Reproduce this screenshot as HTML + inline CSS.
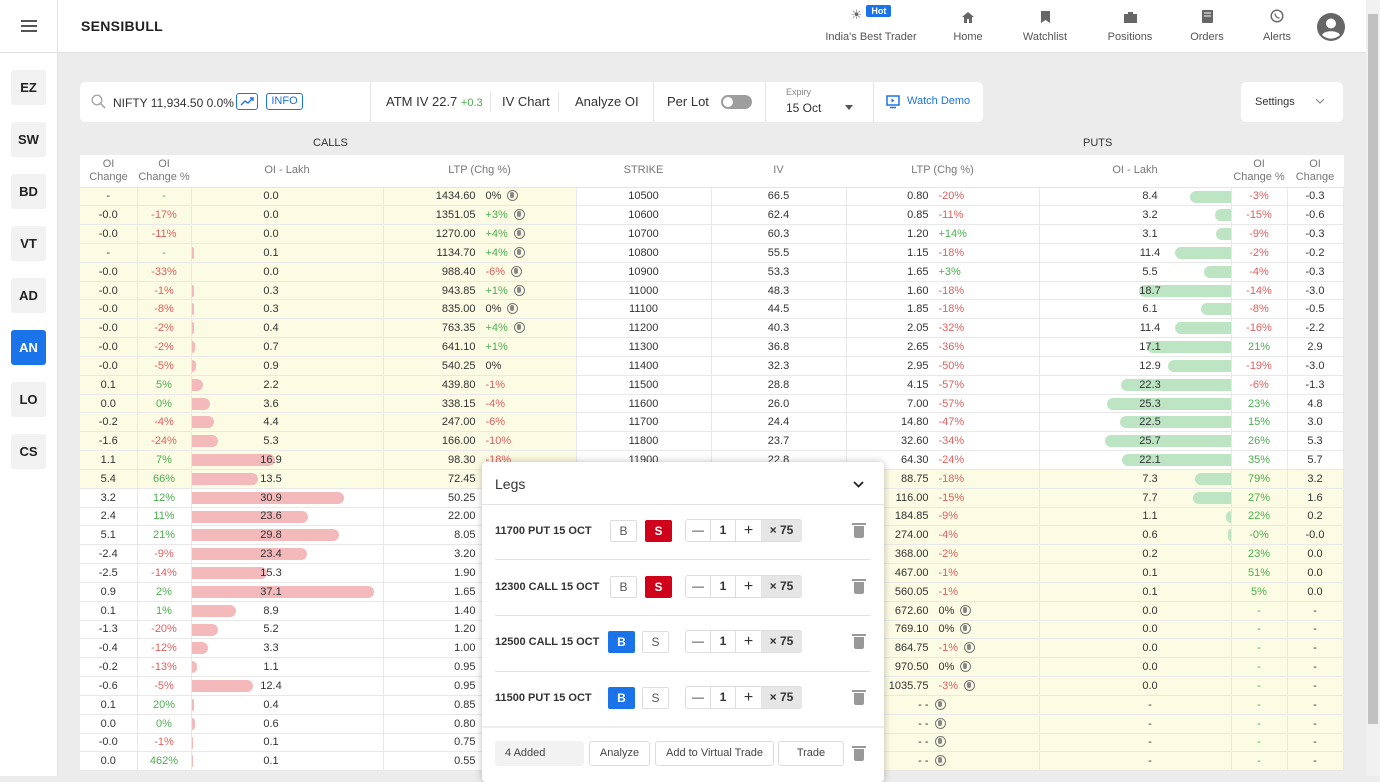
<!DOCTYPE html>
<html><head><meta charset="utf-8">
<style>
*{box-sizing:border-box;margin:0;padding:0}
body{width:1380px;height:776px;overflow:hidden;background:#ececec;font-family:"Liberation Sans",Arial,sans-serif;color:#333;position:relative}
.top{position:absolute;left:0;top:0;width:1366px;height:53px;background:#fff;border-bottom:1px solid #e2e2e2}
.side{position:absolute;left:0;top:53px;width:58px;height:723px;background:#fff;border-right:1px solid #e2e2e2}
.ham{position:absolute;left:0;top:0;width:58px;height:53px;border-right:1px solid #e2e2e2}
.ham i{position:absolute;left:21px;width:16px;height:2px;background:#555}
.logo{position:absolute;left:81px;top:18px;font-size:14px;font-weight:bold;letter-spacing:.3px;color:#222}
.nav{position:absolute;top:0;height:53px;text-align:center;font-size:11px;color:#555}
.nav .ic{height:25px;display:flex;justify-content:center;align-items:flex-end;padding-bottom:2px}
.nav .t{margin-top:6px}
.sb{position:absolute;left:11px;width:35px;height:35px;background:#f2f2f2;border-radius:3px;font-weight:bold;font-size:13px;color:#222;text-align:center;line-height:35px}
.card{position:absolute;background:#fff;border-radius:5px}
.tb{font-size:13px;color:#333}
.dv{position:absolute;width:1px;background:#e5e5e5}
table{position:absolute;left:80px;top:155px;border-collapse:collapse;table-layout:fixed;font-size:11px;background:#fff}
th{height:32px;font-weight:normal;color:#777;font-size:11px;line-height:13px;border-bottom:1px solid #e5e5e5}
td{height:18.83px;border:1px solid #e8e8e8;text-align:center;padding:0;position:relative;white-space:nowrap}
tr td:first-child{border-left:none}
.y{background:#fcfbe3}
.r{color:#e06060}.g{color:#4caf50}
td.oc .bar{position:absolute;left:0;top:3px;height:12px;background:#f4b9bb;border-radius:0 6px 6px 0}
td.oc span{position:relative;display:inline-block;margin-left:-32px}
td.op .bar{position:absolute;right:0;top:3px;height:12px;background:#bde4c3;border-radius:6px 0 0 6px}
td.op span{position:relative;display:inline-block;margin-left:30px}
td.lc{text-align:left}
td.lc b{font-weight:normal;display:inline-block;width:92px;text-align:right}
td.lp{text-align:left}
td.lp b{font-weight:normal;display:inline-block;width:82px;text-align:right}
td i{font-style:normal;margin-left:10px}
.ico{display:inline-block;width:11px;height:11px;border:1.3px solid #777;border-radius:50%;margin-left:6px;vertical-align:-2px;position:relative}
.ico:after{content:"";position:absolute;left:2px;top:1px;width:4px;height:6px;background:#888;border-radius:2px}
.pop{position:absolute;left:482px;top:462px;width:402px;height:320px;background:#fff;border-radius:4px;box-shadow:0 0 8px rgba(0,0,0,.25)}
.leg{position:absolute;left:13px;width:375px;height:56px;font-size:11px;font-weight:bold;color:#333}
.leg .n{position:absolute;left:0;top:16px}
.bx{position:absolute;top:11px;width:27px;height:22px;border:1px solid #ddd;border-radius:2px;text-align:center;line-height:20px;font-size:12px;color:#555;font-weight:normal;background:#fff}
.bs{background:#d0021b;border-color:#d0021b;color:#fff;font-weight:bold}
.bb{background:#1a73e8;border-color:#1a73e8;color:#fff;font-weight:bold}
.qty{position:absolute;left:190px;top:10px;width:117px;height:23px;border:1px solid #ddd;border-radius:3px;font-size:12px;font-weight:normal}
.qty div{position:absolute;top:0;height:21px;line-height:21px;text-align:center}
.trash{position:absolute;width:12px;height:15px}
.trash:before{content:"";position:absolute;left:0;top:0;width:14px;height:2px;background:#999;margin-left:-1px}
.trash:after{content:"";position:absolute;left:1px;top:3px;width:10px;height:12px;background:#999;border-radius:0 0 2px 2px}
.fb{position:absolute;top:279px;height:25px;border:1px solid #ddd;border-radius:3px;font-size:11px;color:#444;text-align:center;line-height:23px}
</style></head><body>
<div class="top">
 <div class="ham"><i style="top:20px"></i><i style="top:25px"></i><i style="top:30px"></i></div>
 <div class="logo">SENSIBULL</div>
 <div class="nav" style="left:822px;width:98px"><div class="ic"><span style="color:#666;font-size:13px">☀</span><span style="background:#1a73e8;color:#fff;font-size:9px;font-weight:bold;padding:1px 5px;border-radius:2px;margin-left:4px;position:relative;top:-6px">Hot</span></div><div class="t">India's Best Trader</div></div>
 <div class="nav" style="left:948px;width:40px"><div class="ic"><svg width="12" height="11" viewBox="0 0 12 11"><path d="M6 0L0 5h2v6h3V7h2v4h3V5h2z" fill="#666"/></svg></div><div class="t">Home</div></div>
 <div class="nav" style="left:1018px;width:54px"><div class="ic"><svg width="9" height="12"><path d="M0 0h9v12L4.5 9 0 12z" fill="#666"/></svg></div><div class="t">Watchlist</div></div>
 <div class="nav" style="left:1103px;width:54px"><div class="ic"><svg width="13" height="11"><path d="M4 2V0h5v2h4v9H0V2z" fill="#666"/></svg></div><div class="t">Positions</div></div>
 <div class="nav" style="left:1187px;width:40px"><div class="ic"><svg width="11" height="13"><rect width="11" height="13" rx="1" fill="#666"/><path d="M2 3h7M2 6h7" stroke="#fff"/></svg></div><div class="t">Orders</div></div>
 <div class="nav" style="left:1258px;width:38px"><div class="ic"><svg width="14" height="14"><circle cx="7" cy="7" r="5.8" fill="none" stroke="#666" stroke-width="1.4"/><path d="M5 4.5c0 2.5 2 4.5 4.5 4.5" stroke="#666" stroke-width="1.3" fill="none"/></svg></div><div class="t">Alerts</div></div>
 <svg style="position:absolute;left:1317px;top:13px" width="28" height="28"><circle cx="14" cy="14" r="14" fill="#666"/><circle cx="14" cy="10.5" r="5" fill="#fff"/><path d="M5 22c2-5 16-5 18 0a13 13 0 0 1-18 0z" fill="#fff"/></svg>
</div>
<div style="position:absolute;left:1366px;top:0;width:14px;height:776px;background:#f1f1f1"><div style="position:absolute;left:2px;top:14px;width:10px;height:710px;background:#c1c1c1"></div></div>
<div class="side">
 <div class="sb" style="top:17px">EZ</div><div class="sb" style="top:69px">SW</div><div class="sb" style="top:121px">BD</div><div class="sb" style="top:173px">VT</div><div class="sb" style="top:225px">AD</div><div class="sb" style="top:277px;background:#1a73e8;color:#fff">AN</div><div class="sb" style="top:329px">LO</div><div class="sb" style="top:381px">CS</div>
</div>
<div class="card tb" style="left:80px;top:82px;width:903px;height:40px">
 <svg style="position:absolute;left:11px;top:12px" width="15" height="15"><circle cx="6" cy="6" r="4.8" fill="none" stroke="#aaa" stroke-width="1.4"/><path d="M9.5 9.5l4.5 4.5" stroke="#aaa" stroke-width="1.6"/></svg>
 <div style="position:absolute;left:33px;top:14px;font-size:12px">NIFTY 11,934.50 0.0%</div>
 <div style="position:absolute;left:156px;top:11px;width:22px;height:17px;border:1.3px solid #1a73e8;border-radius:3px"><svg width="20" height="15"><path d="M4 11l4-4 3 2 5-5M13 4h3v3" stroke="#1a73e8" stroke-width="1.4" fill="none"/></svg></div>
 <div style="position:absolute;left:186px;top:11px;width:37px;height:17px;border:1.3px solid #1a73e8;border-radius:3px;color:#1a73e8;font-size:11px;text-align:center;line-height:15px">INFO</div>
 <div class="dv" style="left:290px;top:0;height:40px"></div>
 <div style="position:absolute;left:306px;top:12px">ATM IV 22.7 <span class="g" style="font-size:11px">+0.3</span></div>
 <div class="dv" style="left:410px;top:10px;height:20px"></div>
 <div style="position:absolute;left:422px;top:12px">IV Chart</div>
 <div class="dv" style="left:478px;top:10px;height:20px"></div>
 <div style="position:absolute;left:495px;top:12px">Analyze OI</div>
 <div class="dv" style="left:573px;top:0;height:40px"></div>
 <div style="position:absolute;left:587px;top:12px">Per Lot</div>
 <div style="position:absolute;left:641px;top:13px;width:31px;height:14px;border-radius:7px;background:#9e9e9e"><div style="position:absolute;left:2px;top:2px;width:10px;height:10px;border-radius:50%;background:#fff"></div></div>
 <div class="dv" style="left:685px;top:0;height:40px"></div>
 <div style="position:absolute;left:706px;top:5px;font-size:9px;color:#888">Expiry</div>
 <div style="position:absolute;left:706px;top:19px;font-size:12px">15 Oct</div>
 <div style="position:absolute;left:765px;top:23px;border:4.5px solid transparent;border-top:5px solid #555"></div>
 <div class="dv" style="left:793px;top:0;height:40px"></div>
 <svg style="position:absolute;left:806px;top:13px" width="14" height="14"><rect x="1" y="1" width="12" height="9" fill="none" stroke="#1a73e8" stroke-width="1.5"/><path d="M5.5 3.5v4l3-2z" fill="#1a73e8"/><path d="M4 12.5h6" stroke="#1a73e8" stroke-width="1.5"/></svg>
 <div style="position:absolute;left:827px;top:13px;font-size:11px;color:#1a73e8">Watch Demo</div>
</div>
<div class="card" style="left:1241px;top:82px;width:102px;height:40px;font-size:11px">
 <div style="position:absolute;left:14px;top:14px">Settings</div>
 <svg style="position:absolute;left:74px;top:16px" width="10" height="7"><path d="M1 1l4 4 4-4" stroke="#888" stroke-width="1.2" fill="none"/></svg>
</div>
<div style="position:absolute;left:313px;top:137px;font-size:11px;color:#333">CALLS</div>
<div style="position:absolute;left:1083px;top:137px;font-size:11px;color:#333">PUTS</div>
<div style="position:absolute;left:80px;top:155px;width:1263px;height:32px;background:#fff;border-radius:5px 5px 0 0"></div>
<table>
<colgroup><col style="width:57px"><col style="width:54px"><col style="width:192px"><col style="width:193px"><col style="width:135px"><col style="width:135px"><col style="width:193px"><col style="width:192px"><col style="width:56px"><col style="width:56px"></colgroup>
<tr><th>OI<br>Change</th><th>OI<br>Change %</th><th>OI - Lakh</th><th>LTP (Chg %)</th><th>STRIKE</th><th>IV</th><th>LTP (Chg %)</th><th>OI - Lakh</th><th>OI<br>Change %</th><th>OI<br>Change</th></tr>
<tr class="c"><td class="y">-</td><td class="y g">-</td><td class="y oc"><span>0.0</span></td><td class="y lc"><b>1434.60</b><i>0%</i><s class="ico"></s></td><td>10500</td><td>66.5</td><td class="lp"><b>0.80</b><i class="r">-20%</i></td><td class="op"><div class="bar" style="width:41px"></div><span>8.4</span></td><td class="r">-3%</td><td>-0.3</td></tr>
<tr><td class="y">-0.0</td><td class="y r">-17%</td><td class="y oc"><span>0.0</span></td><td class="y lc"><b>1351.05</b><i class="g">+3%</i><s class="ico"></s></td><td>10600</td><td>62.4</td><td class="lp"><b>0.85</b><i class="r">-11%</i></td><td class="op"><div class="bar" style="width:16px"></div><span>3.2</span></td><td class="r">-15%</td><td>-0.6</td></tr>
<tr><td class="y">-0.0</td><td class="y r">-11%</td><td class="y oc"><span>0.0</span></td><td class="y lc"><b>1270.00</b><i class="g">+4%</i><s class="ico"></s></td><td>10700</td><td>60.3</td><td class="lp"><b>1.20</b><i class="g">+14%</i></td><td class="op"><div class="bar" style="width:15px"></div><span>3.1</span></td><td class="r">-9%</td><td>-0.3</td></tr>
<tr><td class="y">-</td><td class="y g">-</td><td class="y oc"><div class="bar" style="width:2px"></div><span>0.1</span></td><td class="y lc"><b>1134.70</b><i class="g">+4%</i><s class="ico"></s></td><td>10800</td><td>55.5</td><td class="lp"><b>1.15</b><i class="r">-18%</i></td><td class="op"><div class="bar" style="width:56px"></div><span>11.4</span></td><td class="r">-2%</td><td>-0.2</td></tr>
<tr><td class="y">-0.0</td><td class="y r">-33%</td><td class="y oc"><span>0.0</span></td><td class="y lc"><b>988.40</b><i class="r">-6%</i><s class="ico"></s></td><td>10900</td><td>53.3</td><td class="lp"><b>1.65</b><i class="g">+3%</i></td><td class="op"><div class="bar" style="width:27px"></div><span>5.5</span></td><td class="r">-4%</td><td>-0.3</td></tr>
<tr><td class="y">-0.0</td><td class="y r">-1%</td><td class="y oc"><div class="bar" style="width:2px"></div><span>0.3</span></td><td class="y lc"><b>943.85</b><i class="g">+1%</i><s class="ico"></s></td><td>11000</td><td>48.3</td><td class="lp"><b>1.60</b><i class="r">-18%</i></td><td class="op"><div class="bar" style="width:92px"></div><span>18.7</span></td><td class="r">-14%</td><td>-3.0</td></tr>
<tr><td class="y">-0.0</td><td class="y r">-8%</td><td class="y oc"><div class="bar" style="width:2px"></div><span>0.3</span></td><td class="y lc"><b>835.00</b><i>0%</i><s class="ico"></s></td><td>11100</td><td>44.5</td><td class="lp"><b>1.85</b><i class="r">-18%</i></td><td class="op"><div class="bar" style="width:30px"></div><span>6.1</span></td><td class="r">-8%</td><td>-0.5</td></tr>
<tr><td class="y">-0.0</td><td class="y r">-2%</td><td class="y oc"><div class="bar" style="width:2px"></div><span>0.4</span></td><td class="y lc"><b>763.35</b><i class="g">+4%</i><s class="ico"></s></td><td>11200</td><td>40.3</td><td class="lp"><b>2.05</b><i class="r">-32%</i></td><td class="op"><div class="bar" style="width:56px"></div><span>11.4</span></td><td class="r">-16%</td><td>-2.2</td></tr>
<tr><td class="y">-0.0</td><td class="y r">-2%</td><td class="y oc"><div class="bar" style="width:3px"></div><span>0.7</span></td><td class="y lc"><b>641.10</b><i class="g">+1%</i></td><td>11300</td><td>36.8</td><td class="lp"><b>2.65</b><i class="r">-36%</i></td><td class="op"><div class="bar" style="width:84px"></div><span>17.1</span></td><td class="g">21%</td><td>2.9</td></tr>
<tr><td class="y">-0.0</td><td class="y r">-5%</td><td class="y oc"><div class="bar" style="width:4px"></div><span>0.9</span></td><td class="y lc"><b>540.25</b><i>0%</i></td><td>11400</td><td>32.3</td><td class="lp"><b>2.95</b><i class="r">-50%</i></td><td class="op"><div class="bar" style="width:63px"></div><span>12.9</span></td><td class="r">-19%</td><td>-3.0</td></tr>
<tr><td class="y">0.1</td><td class="y g">5%</td><td class="y oc"><div class="bar" style="width:11px"></div><span>2.2</span></td><td class="y lc"><b>439.80</b><i class="r">-1%</i></td><td>11500</td><td>28.8</td><td class="lp"><b>4.15</b><i class="r">-57%</i></td><td class="op"><div class="bar" style="width:110px"></div><span>22.3</span></td><td class="r">-6%</td><td>-1.3</td></tr>
<tr><td class="y">0.0</td><td class="y g">0%</td><td class="y oc"><div class="bar" style="width:18px"></div><span>3.6</span></td><td class="y lc"><b>338.15</b><i class="r">-4%</i></td><td>11600</td><td>26.0</td><td class="lp"><b>7.00</b><i class="r">-57%</i></td><td class="op"><div class="bar" style="width:124px"></div><span>25.3</span></td><td class="g">23%</td><td>4.8</td></tr>
<tr><td class="y">-0.2</td><td class="y r">-4%</td><td class="y oc"><div class="bar" style="width:22px"></div><span>4.4</span></td><td class="y lc"><b>247.00</b><i class="r">-6%</i></td><td>11700</td><td>24.4</td><td class="lp"><b>14.80</b><i class="r">-47%</i></td><td class="op"><div class="bar" style="width:111px"></div><span>22.5</span></td><td class="g">15%</td><td>3.0</td></tr>
<tr><td class="y">-1.6</td><td class="y r">-24%</td><td class="y oc"><div class="bar" style="width:26px"></div><span>5.3</span></td><td class="y lc"><b>166.00</b><i class="r">-10%</i></td><td>11800</td><td>23.7</td><td class="lp"><b>32.60</b><i class="r">-34%</i></td><td class="op"><div class="bar" style="width:126px"></div><span>25.7</span></td><td class="g">26%</td><td>5.3</td></tr>
<tr><td class="y">1.1</td><td class="y g">7%</td><td class="y oc"><div class="bar" style="width:83px"></div><span>16.9</span></td><td class="y lc"><b>98.30</b><i class="r">-18%</i></td><td>11900</td><td>22.8</td><td class="lp"><b>64.30</b><i class="r">-24%</i></td><td class="op"><div class="bar" style="width:109px"></div><span>22.1</span></td><td class="g">35%</td><td>5.7</td></tr>
<tr><td class="y">5.4</td><td class="y g">66%</td><td class="y oc"><div class="bar" style="width:66px"></div><span>13.5</span></td><td class="y lc"><b>72.45</b><i class="r">-16%</i></td><td>12000</td><td>21.9</td><td class="y lp"><b>88.75</b><i class="r">-18%</i></td><td class="y op"><div class="bar" style="width:36px"></div><span>7.3</span></td><td class="y g">79%</td><td class="y">3.2</td></tr>
<tr><td>3.2</td><td class="g">12%</td><td class="oc"><div class="bar" style="width:152px"></div><span>30.9</span></td><td class="lc"><b>50.25</b><i class="r">-20%</i></td><td>12100</td><td>21.0</td><td class="y lp"><b>116.00</b><i class="r">-15%</i></td><td class="y op"><div class="bar" style="width:38px"></div><span>7.7</span></td><td class="y g">27%</td><td class="y">1.6</td></tr>
<tr><td>2.4</td><td class="g">11%</td><td class="oc"><div class="bar" style="width:116px"></div><span>23.6</span></td><td class="lc"><b>22.00</b><i class="r">-30%</i></td><td>12200</td><td>20.1</td><td class="y lp"><b>184.85</b><i class="r">-9%</i></td><td class="y op"><div class="bar" style="width:5px"></div><span>1.1</span></td><td class="y g">22%</td><td class="y">0.2</td></tr>
<tr><td>5.1</td><td class="g">21%</td><td class="oc"><div class="bar" style="width:147px"></div><span>29.8</span></td><td class="lc"><b>8.05</b><i class="r">-40%</i></td><td>12300</td><td>19.5</td><td class="y lp"><b>274.00</b><i class="r">-4%</i></td><td class="y op"><div class="bar" style="width:3px"></div><span>0.6</span></td><td class="y g">-0%</td><td class="y">-0.0</td></tr>
<tr><td>-2.4</td><td class="r">-9%</td><td class="oc"><div class="bar" style="width:115px"></div><span>23.4</span></td><td class="lc"><b>3.20</b><i class="r">-40%</i></td><td>12400</td><td>19.8</td><td class="y lp"><b>368.00</b><i class="r">-2%</i></td><td class="y op"><span>0.2</span></td><td class="y g">23%</td><td class="y">0.0</td></tr>
<tr><td>-2.5</td><td class="r">-14%</td><td class="oc"><div class="bar" style="width:75px"></div><span>15.3</span></td><td class="lc"><b>1.90</b><i class="r">-30%</i></td><td>12500</td><td>21.0</td><td class="y lp"><b>467.00</b><i class="r">-1%</i></td><td class="y op"><span>0.1</span></td><td class="y g">51%</td><td class="y">0.0</td></tr>
<tr><td>0.9</td><td class="g">2%</td><td class="oc"><div class="bar" style="width:182px"></div><span>37.1</span></td><td class="lc"><b>1.65</b><i class="r">-20%</i></td><td>12600</td><td>22.0</td><td class="y lp"><b>560.05</b><i class="r">-1%</i></td><td class="y op"><span>0.1</span></td><td class="y g">5%</td><td class="y">0.0</td></tr>
<tr><td>0.1</td><td class="g">1%</td><td class="oc"><div class="bar" style="width:44px"></div><span>8.9</span></td><td class="lc"><b>1.40</b><i class="r">-10%</i></td><td>12700</td><td>24.0</td><td class="y lp"><b>672.60</b><i>0%</i><s class="ico"></s></td><td class="y op"><span>0.0</span></td><td class="y g">-</td><td class="y">-</td></tr>
<tr><td>-1.3</td><td class="r">-20%</td><td class="oc"><div class="bar" style="width:26px"></div><span>5.2</span></td><td class="lc"><b>1.20</b><i class="r">-10%</i></td><td>12800</td><td>26.0</td><td class="y lp"><b>769.10</b><i>0%</i><s class="ico"></s></td><td class="y op"><span>0.0</span></td><td class="y g">-</td><td class="y">-</td></tr>
<tr><td>-0.4</td><td class="r">-12%</td><td class="oc"><div class="bar" style="width:16px"></div><span>3.3</span></td><td class="lc"><b>1.00</b><i class="r">-10%</i></td><td>12900</td><td>27.0</td><td class="y lp"><b>864.75</b><i class="r">-1%</i><s class="ico"></s></td><td class="y op"><span>0.0</span></td><td class="y g">-</td><td class="y">-</td></tr>
<tr><td>-0.2</td><td class="r">-13%</td><td class="oc"><div class="bar" style="width:5px"></div><span>1.1</span></td><td class="lc"><b>0.95</b><i class="r">-10%</i></td><td>13000</td><td>29.0</td><td class="y lp"><b>970.50</b><i>0%</i><s class="ico"></s></td><td class="y op"><span>0.0</span></td><td class="y g">-</td><td class="y">-</td></tr>
<tr><td>-0.6</td><td class="r">-5%</td><td class="oc"><div class="bar" style="width:61px"></div><span>12.4</span></td><td class="lc"><b>0.95</b><i class="r">-10%</i></td><td>13100</td><td>31.0</td><td class="y lp"><b>1035.75</b><i class="r">-3%</i><s class="ico"></s></td><td class="y op"><span>0.0</span></td><td class="y g">-</td><td class="y">-</td></tr>
<tr><td>0.1</td><td class="g">20%</td><td class="oc"><div class="bar" style="width:2px"></div><span>0.4</span></td><td class="lc"><b>0.85</b><i class="r">-10%</i></td><td>13200</td><td>33.0</td><td class="y lp"><b>- -</b><s class="ico"></s></td><td class="y op"><span>-</span></td><td class="y g">-</td><td class="y">-</td></tr>
<tr><td>0.0</td><td class="g">0%</td><td class="oc"><div class="bar" style="width:3px"></div><span>0.6</span></td><td class="lc"><b>0.80</b><i class="r">-10%</i></td><td>13300</td><td>35.0</td><td class="y lp"><b>- -</b><s class="ico"></s></td><td class="y op"><span>-</span></td><td class="y g">-</td><td class="y">-</td></tr>
<tr><td>-0.0</td><td class="r">-1%</td><td class="oc"><div class="bar" style="width:1px"></div><span>0.1</span></td><td class="lc"><b>0.75</b><i class="r">-10%</i></td><td>13400</td><td>37.0</td><td class="y lp"><b>- -</b><s class="ico"></s></td><td class="y op"><span>-</span></td><td class="y g">-</td><td class="y">-</td></tr>
<tr><td>0.0</td><td class="g">462%</td><td class="oc"><div class="bar" style="width:1px"></div><span>0.1</span></td><td class="lc"><b>0.55</b><i class="r">-10%</i></td><td>13500</td><td>39.0</td><td class="y lp"><b>- -</b><s class="ico"></s></td><td class="y op"><span>-</span></td><td class="y g">-</td><td class="y">-</td></tr>
</table>
<div class="pop">
 <div style="position:absolute;left:13px;top:14px;font-size:14px;color:#333">Legs</div>
 <svg style="position:absolute;left:371px;top:19px" width="11" height="8"><path d="M1 1l4.5 4.5L10 1" stroke="#222" stroke-width="1.8" fill="none"/></svg>
 <div style="position:absolute;left:0;top:42px;width:402px;height:1px;background:#e3e3e3"></div>
 <div class="leg" style="top:47px"><div class="n">11700 PUT 15 OCT</div><div class="bx" style="left:115px">B</div><div class="bx bs" style="left:150px">S</div><div class="qty"><div style="left:0;width:25px;border-right:1px solid #ddd">—</div><div style="left:25px;width:25px;border-right:1px solid #ddd;font-weight:bold">1</div><div style="left:50px;width:25px;font-size:16px">+</div><div style="left:75px;width:41px;background:#e6e6e6;font-weight:bold">× 75</div></div><div class="trash" style="left:358px;top:14px"></div></div>
 <div style="position:absolute;left:13px;top:97px;width:376px;height:1px;background:#e3e3e3"></div>
 <div class="leg" style="top:103px"><div class="n">12300 CALL 15 OCT</div><div class="bx" style="left:115px">B</div><div class="bx bs" style="left:150px">S</div><div class="qty"><div style="left:0;width:25px;border-right:1px solid #ddd">—</div><div style="left:25px;width:25px;border-right:1px solid #ddd;font-weight:bold">1</div><div style="left:50px;width:25px;font-size:16px">+</div><div style="left:75px;width:41px;background:#e6e6e6;font-weight:bold">× 75</div></div><div class="trash" style="left:358px;top:14px"></div></div>
 <div style="position:absolute;left:13px;top:153px;width:376px;height:1px;background:#e3e3e3"></div>
 <div class="leg" style="top:158px"><div class="n">12500 CALL 15 OCT</div><div class="bx bb" style="left:113px">B</div><div class="bx" style="left:147px">S</div><div class="qty"><div style="left:0;width:25px;border-right:1px solid #ddd">—</div><div style="left:25px;width:25px;border-right:1px solid #ddd;font-weight:bold">1</div><div style="left:50px;width:25px;font-size:16px">+</div><div style="left:75px;width:41px;background:#e6e6e6;font-weight:bold">× 75</div></div><div class="trash" style="left:358px;top:14px"></div></div>
 <div style="position:absolute;left:13px;top:209px;width:376px;height:1px;background:#e3e3e3"></div>
 <div class="leg" style="top:214px"><div class="n">11500 PUT 15 OCT</div><div class="bx bb" style="left:113px">B</div><div class="bx" style="left:147px">S</div><div class="qty"><div style="left:0;width:25px;border-right:1px solid #ddd">—</div><div style="left:25px;width:25px;border-right:1px solid #ddd;font-weight:bold">1</div><div style="left:50px;width:25px;font-size:16px">+</div><div style="left:75px;width:41px;background:#e6e6e6;font-weight:bold">× 75</div></div><div class="trash" style="left:358px;top:14px"></div></div>
 <div style="position:absolute;left:0;top:264px;width:402px;height:2px;background:#eee"></div>
 <div class="fb" style="left:13px;width:89px;background:#f2f2f2;border-color:#f2f2f2;text-align:left;padding-left:9px">4 Added</div>
 <div class="fb" style="left:107px;width:61px">Analyze</div>
 <div class="fb" style="left:173px;width:119px">Add to Virtual Trade</div>
 <div class="fb" style="left:296px;width:66px">Trade</div>
 <div class="trash" style="left:371px;top:284px"></div>
</div>
</body></html>
